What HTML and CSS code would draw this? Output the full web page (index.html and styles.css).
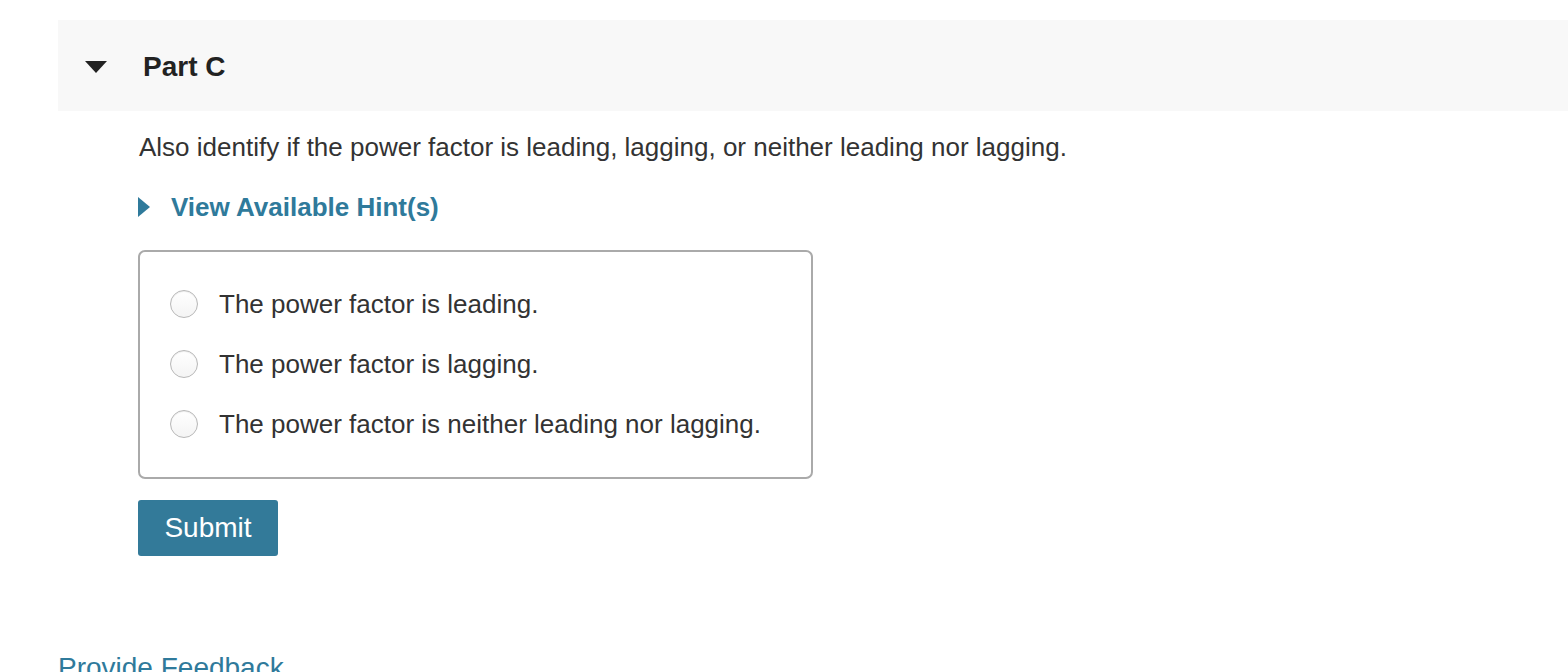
FILE: index.html
```html
<!DOCTYPE html>
<html>
<head>
<meta charset="utf-8">
<link rel="stylesheet" href="styles.css">
</head>
<body>
<div class="page">
  <div class="part-header">
    <span class="caret-down"></span>
    <h2 class="part-title">Part C</h2>
  </div>
  <div class="part-body">
    <p class="question">Also identify if the power factor is leading, lagging, or neither leading nor lagging.</p>
    <div class="hint">
      <span class="caret-right"></span>
      <span class="hint-text">View Available Hint(s)</span>
    </div>
    <div class="choices">
      <label class="choice"><span class="radio"></span><span>The power factor is leading.</span></label>
      <label class="choice"><span class="radio"></span><span>The power factor is lagging.</span></label>
      <label class="choice"><span class="radio"></span><span>The power factor is neither leading nor lagging.</span></label>
    </div>
    <button class="submit">Submit</button>
  </div>
  <div class="feedback">Provide Feedback</div>
</div>
</body>
</html>
```
FILE: styles.css
```css
html, body {
  margin: 0;
  padding: 0;
  background: #fff;
  font-family: "Liberation Sans", Arial, sans-serif;
  color: #333;
  overflow: hidden;
}
.page {
  padding: 20px 0 0 58px;
}
.part-header {
  display: flex;
  align-items: center;
  box-sizing: border-box;
  height: 91px;
  padding-top: 3px;
  background: #f8f8f8;
}
.caret-down {
  width: 0;
  height: 0;
  margin-left: 27px;
  border-left: 11px solid transparent;
  border-right: 11px solid transparent;
  border-top: 12px solid #222;
}
.part-title {
  margin: 0 0 0 36px;
  font-size: 28px;
  font-weight: bold;
  color: #222;
}
.part-body {
  padding-left: 80px;
}
.question {
  margin: 21px 0 0 1px;
  font-size: 26px;
  line-height: 30px;
}
.hint {
  display: flex;
  align-items: center;
  margin-top: 30px;
  height: 30px;
}
.caret-right {
  width: 0;
  height: 0;
  margin-left: 0;
  border-top: 10px solid transparent;
  border-bottom: 10px solid transparent;
  border-left: 12px solid #2f7a9b;
}
.hint-text {
  margin-left: 21px;
  font-size: 26px;
  font-weight: bold;
  color: #2f7a9b;
}
.choices {
  margin-top: 28px;
  width: 671px;
  border: 2px solid #aaa;
  border-radius: 7px;
  padding: 38px 0 39px;
  display: flex;
  flex-direction: column;
  gap: 32px;
}
.choice {
  display: flex;
  align-items: center;
  height: 28px;
  font-size: 26px;
}
.radio {
  box-sizing: border-box;
  width: 28px;
  height: 28px;
  margin-left: 30px;
  margin-right: 21px;
  border: 1px solid #b8b8b8;
  border-radius: 50%;
  background: linear-gradient(#fff, #f4f4f4);
  box-shadow: inset 0 1px 1px rgba(0,0,0,0.08);
}
.submit {
  display: block;
  margin-top: 21px;
  width: 140px;
  height: 56px;
  border: none;
  border-radius: 3px;
  background: #337a99;
  color: #fff;
  font-family: "Liberation Sans", Arial, sans-serif;
  font-size: 28px;
  padding: 0;
}
.feedback {
  margin-top: 96px;
  font-size: 28px;
  color: #2f7a9b;
}
```
